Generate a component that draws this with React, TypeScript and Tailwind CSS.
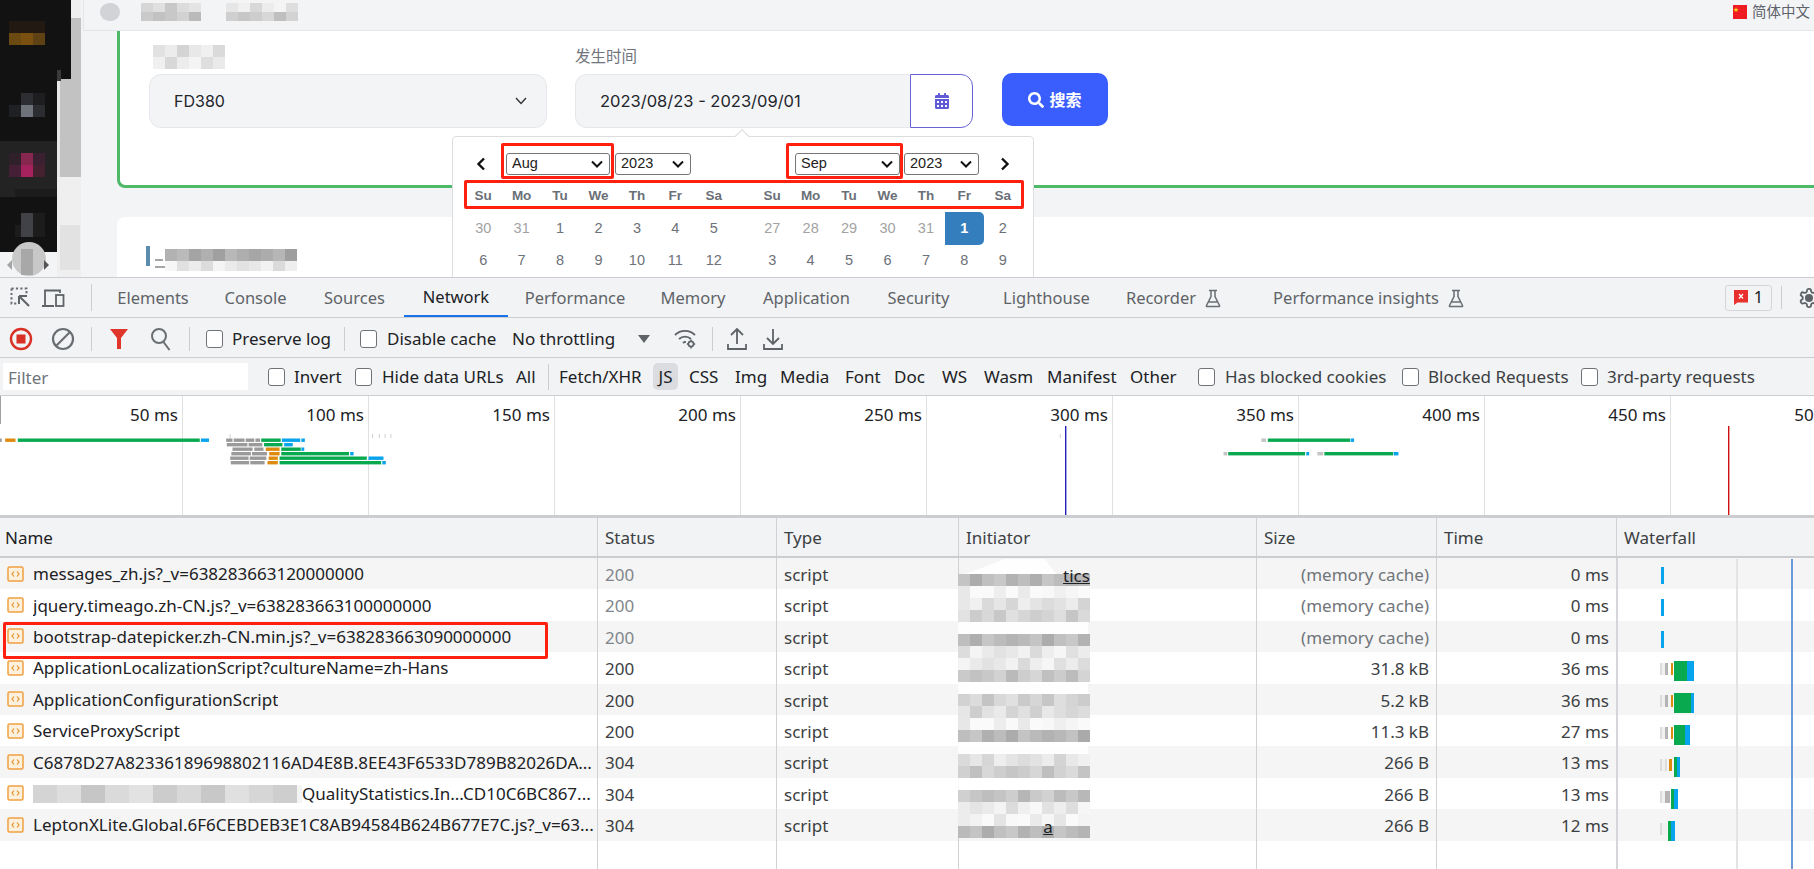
import React from "react";
import { FaCalendarAlt, FaSearch } from "react-icons/fa";

const DT = "font-['Noto_Sans','Noto_Sans_CJK_SC',sans-serif]";
const SANS = "font-['Inter','Noto_Sans_CJK_SC',sans-serif]";
const ARIAL = "font-['Liberation_Sans',sans-serif]";
const jitter = [0, 10, -14, 6, 14, -8, 4, -12, 12, 2, -6];

function Band({ x, y, n, g, w = 12, h = 12 }: { x: number; y: number; n: number; g: number; w?: number; h?: number }) {
  return (
    <>
      {Array.from({ length: n }).map((_, i) => {
        const v = Math.min(250, g + jitter[(i + Math.round(y)) % jitter.length]);
        return <rect key={i} x={x + i * w} y={y} width={w} height={h} fill={`rgb(${v},${v},${v})`} />;
      })}
    </>
  );
}

function Sidebar() {
  return (
    <svg className="w-[83px] h-[277px] shrink-0 bg-[#f3f4f6]" viewBox="0 0 83 277">
      <rect x="57" y="0" width="24" height="277" fill="#efefef" />
      <rect x="60" y="18" width="21" height="159" fill="#c2c2c2" />
      <rect x="57" y="70" width="3" height="107" fill="#e8e8e8" />
      <rect x="0" y="0" width="71" height="79" fill="#121212" />
      <rect x="0" y="79" width="57" height="173" fill="#121212" />
      <rect x="57" y="70" width="4" height="11" fill="#3a3a3a" />
      <rect x="9" y="21" width="36" height="12" fill="#221a12" />
      <rect x="9" y="33" width="12" height="12" fill="#6b4a12" />
      <rect x="21" y="33" width="12" height="12" fill="#7a5010" />
      <rect x="33" y="33" width="12" height="12" fill="#5e4214" />
      <rect x="21" y="93" width="12" height="12" fill="#2c2e33" />
      <rect x="33" y="93" width="12" height="12" fill="#1e1e20" />
      <rect x="9" y="105" width="12" height="12" fill="#1e2024" />
      <rect x="21" y="105" width="12" height="12" fill="#6e727b" />
      <rect x="33" y="105" width="12" height="12" fill="#2c2d30" />
      <rect x="0" y="141" width="57" height="56" fill="#232323" />
      <rect x="9" y="153" width="12" height="12" fill="#30202a" />
      <rect x="21" y="153" width="12" height="12" fill="#85274f" />
      <rect x="33" y="153" width="12" height="12" fill="#3a2030" />
      <rect x="9" y="165" width="12" height="12" fill="#451f35" />
      <rect x="21" y="165" width="12" height="12" fill="#a6225f" />
      <rect x="33" y="165" width="12" height="12" fill="#45202f" />
      <rect x="15" y="189" width="42" height="8" fill="#1c1c1c" />
      <rect x="15" y="225" width="6" height="12" fill="#1c1c1c" />
      <rect x="21" y="213" width="12" height="24" fill="#404248" />
      <rect x="33" y="213" width="12" height="24" fill="#1c1c1c" />
      <rect x="60" y="225" width="20" height="45" fill="#e2e2e2" />
      <circle cx="29" cy="259" r="17" fill="#c8c8c8" />
      <rect x="21" y="249" width="12" height="26" fill="#a8a8a8" />
      <path d="M12 260l-5 5 5 5z" fill="#a5a5a5" />
      <path d="M44 260l5 5-5 5z" fill="#555" />
    </svg>
  );
}

const off1 = ["30", "31"];
const leftDays = [["30", "31", "1", "2", "3", "4", "5"], ["6", "7", "8", "9", "10", "11", "12"]];
const rightDays = [["27", "28", "29", "30", "31", "1", "2"], ["3", "4", "5", "6", "7", "8", "9"]];
const week = ["Su", "Mo", "Tu", "We", "Th", "Fr", "Sa"];

function Chevron({ className }: { className: string }) {
  return (
    <svg className={className} viewBox="0 0 12 8" fill="none" stroke="#111" strokeWidth="2">
      <path d="M1 1.5l5 5 5-5" />
    </svg>
  );
}

function MiniSelect({ label, w }: { label: string; w: string }) {
  return (
    <div className={`${w} h-[22px] border border-[#767676] rounded-[3px] flex items-center justify-between pl-[5px] pr-[6px] text-[14.5px] text-[#222] bg-white`}>
      <span>{label}</span>
      <Chevron className="w-[12px] h-[8px]" />
    </div>
  );
}

function Calendar({ rows, kind }: { rows: string[][]; kind: "left" | "right" }) {
  return (
    <div className="w-[269px]">
      <div className="h-[22px] flex items-center">
        {kind === "left" ? (
          <>
            <svg className="w-[10px] h-[14px] ml-[12px] mr-[20px]" viewBox="0 0 10 14" fill="none" stroke="#111" strokeWidth="2.4">
              <path d="M8 1.5L2.5 7 8 12.5" />
            </svg>
            <MiniSelect label="Aug" w="w-[104px]" />
            <div className="w-[5px]" />
            <MiniSelect label="2023" w="w-[76px]" />
          </>
        ) : (
          <>
            <div className="w-[42px]" />
            <MiniSelect label="Sep" w="w-[105px]" />
            <div className="w-[4px]" />
            <MiniSelect label="2023" w="w-[75px]" />
            <svg className="w-[10px] h-[14px] ml-[21px]" viewBox="0 0 10 14" fill="none" stroke="#111" strokeWidth="2.4">
              <path d="M2 1.5L7.5 7 2 12.5" />
            </svg>
          </>
        )}
      </div>
      <div className="mt-[5px] grid grid-cols-7 h-[32px] items-center text-center text-[13.5px] font-bold text-[#6b7078]">
        {week.map((d) => (
          <div key={d}>{d}</div>
        ))}
      </div>
      {rows.map((r, ri) => (
        <div key={ri} className="grid grid-cols-7 h-[32px] text-center text-[14.5px] text-[#6d7178]">
          {r.map((d, i) => {
            const isOff = ri === 0 && (kind === "left" ? off1.includes(d) && i < 2 : i < 5);
            const sel = kind === "right" && ri === 0 && i === 5;
            return (
              <div
                key={i}
                className={
                  sel
                    ? "h-[33px] leading-[33px] bg-[#357ebd] text-white font-bold rounded-r-[5px]"
                    : isOff
                      ? "leading-[32px] text-[#a3a3a3]"
                      : "leading-[32px]"
                }
              >
                {d}
              </div>
            );
          })}
        </div>
      ))}
    </div>
  );
}

function PageArea() {
  return (
    <div className="relative h-[277px] flex overflow-hidden bg-[#f3f4f6]">
      <Sidebar />
      <div className="flex-1 flex flex-col">
        <div className="h-[31px] shrink-0 border-l border-b border-[#e4e5e8] flex items-start justify-end relative">
          <svg className="absolute left-[16px] top-[3px] w-[215px] h-[18px]" viewBox="0 0 215 18">
            <rect x="0" y="0" width="20" height="18" rx="9" fill="#d2d3d6" />
            <Band x={41} y={0} n={5} g={214} h={9} />
            <Band x={41} y={9} n={5} g={200} h={9} />
            <Band x={126} y={0} n={6} g={230} h={9} />
            <Band x={126} y={9} n={6} g={205} h={9} />
          </svg>
          <div className={`mt-[4px] mr-[4px] flex items-center gap-[5px] text-[14.5px] leading-[16px] text-[#5f636b] ${SANS}`}>
            <svg className="w-[14px] h-[14px]" viewBox="0 0 14 14">
              <rect width="14" height="14" fill="#f01c24" />
              <path d="M3 2l.7 1.9 2 .1-1.6 1.2.6 1.9L3 6l-1.7 1.1.6-1.9L.3 4l2-.1z" fill="#fcd116" />
            </svg>
            <span>简体中文</span>
          </div>
        </div>
        <div className="ml-[34px] h-[157px] shrink-0 bg-white border-l-[3px] border-b-[3px] border-[#4fb96a] rounded-bl-[8px] pl-[29px] flex items-start">
          <div className="w-[398px] mt-[14px]">
            <svg className="w-[80px] h-[24px] block" viewBox="0 0 80 24">
              <Band x={4} y={0} n={6} g={226} />
              <Band x={4} y={12} n={6} g={230} />
            </svg>
            <div className={`mt-[5px] h-[54px] flex items-center justify-between pl-[24px] pr-[19px] bg-[#f3f4f6] border border-[#e6e7ea] rounded-[12px] text-[16px] text-[#22252b] ${SANS}`}>
              <span>FD380</span>
              <svg className="w-[12px] h-[8px]" viewBox="0 0 12 8" fill="none" stroke="#333" strokeWidth="1.4">
                <path d="M1 1l5 5.5L11 1" />
              </svg>
            </div>
          </div>
          <div className={`w-[398px] ml-[28px] mt-[14px] ${SANS}`}>
            <div className="h-[24px] leading-[24px] text-[15.5px] text-[#70747c]">发生时间</div>
            <div className="mt-[5px] flex h-[54px]">
              <div className="w-[335px] flex items-center pl-[24px] bg-[#f3f4f6] border border-r-0 border-[#e6e7ea] rounded-l-[12px] text-[16.5px] text-[#22252b]">
                2023/08/23 - 2023/09/01
              </div>
              <div className="w-[63px] flex items-center justify-center bg-white border border-[#6a63d8] rounded-r-[12px]">
                <FaCalendarAlt className="text-[#5f5bd6] text-[16px]" />
              </div>
            </div>
          </div>
          <div className={`ml-[29px] mt-[42px] w-[106px] h-[53px] bg-[#3a5dfe] rounded-[10px] flex items-center justify-center gap-[5px] text-white font-bold text-[16px] ${SANS}`}>
            <FaSearch className="text-[16px]" />
            <span>搜索</span>
          </div>
        </div>
        <div className="ml-[34px] mt-[29px] flex-1 bg-white rounded-tl-[8px] pl-[29px] pt-[29px]">
          <div className="flex items-start">
            <div className="w-[4px] h-[20px] bg-[#5b8cad]" />
            <svg className="w-[147px] h-[25px]" viewBox="0 0 147 25">
              <path d="M5 14h8M5 21h14" stroke="#888" strokeWidth="1.5" />
              <Band x={15} y={3} n={11} g={172} />
              <Band x={15} y={15} n={11} g={232} h={10} />
            </svg>
          </div>
        </div>
      </div>
      {/* date range popup */}
      <div className={`absolute left-[452px] top-[136px] w-[582px] h-[150px] bg-white border border-[#ddd] rounded-[4px] px-[11px] pt-[16px] flex gap-[20px] ${ARIAL}`}>
        <Calendar rows={leftDays} kind="left" />
        <Calendar rows={rightDays} kind="right" />
      </div>
      <div className="absolute left-[737px] top-[131px] w-[10px] h-[10px] rotate-45 bg-white border-l border-t border-[#ddd]" />
      <div className="absolute left-[501px] top-[143px] w-[113px] h-[36px] border-[3px] border-[#ff2010] rounded-[2px]" />
      <div className="absolute left-[786px] top-[143px] w-[117px] h-[36px] border-[3px] border-[#ff2010] rounded-[2px]" />
      <div className="absolute left-[464px] top-[180px] w-[560px] h-[29px] border-[3px] border-[#ff2010] rounded-[2px]" />
    </div>
  );
}

function Flask() {
  return (
    <svg className="w-[18px] h-[19px]" viewBox="0 0 18 19" fill="none" stroke="#6a6e73" strokeWidth="1.5">
      <path d="M5 1.5h8M7 1.5v6L2.5 16.5c-.3.7 0 1 .7 1h11.6c.7 0 1-.3.7-1L11 7.5v-6M5 13h8" />
    </svg>
  );
}

const tabs = [
  { t: "Elements", w: "w-[106px]" },
  { t: "Console", w: "w-[99px]" },
  { t: "Sources", w: "w-[99px]" },
  { t: "Network", w: "w-[104px]", active: true },
  { t: "Performance", w: "w-[134px]" },
  { t: "Memory", w: "w-[102px]" },
  { t: "Application", w: "w-[125px]" },
  { t: "Security", w: "w-[99px]" },
];

function TabBar() {
  return (
    <div className="h-[41px] flex items-stretch border-t border-b border-[#cbcdd1] bg-[#f1f3f4] text-[#5f6368] relative text-[16.5px]">
      <div className="w-[91px] flex items-center">
        <svg className="w-[22px] h-[22px] ml-[10px]" viewBox="0 0 22 22" fill="none" stroke="#6a6e73">
          <path d="M1.5 1.5h15v6M1.5 1.5v15h6" strokeWidth="2" strokeDasharray="2.2 2.2" />
          <path d="M9 9h8M9 9v8M9 9l10 10" strokeWidth="2" stroke="#5f6368" />
        </svg>
        <svg className="w-[24px] h-[20px] ml-[9px]" viewBox="0 0 24 20" fill="none" stroke="#5f6368" strokeWidth="1.8">
          <path d="M1 18h12M4 18V2.5h15V5" />
          <rect x="15" y="7" width="7.5" height="11" />
        </svg>
      </div>
      <div className="w-px my-[6px] bg-[#cbcdd1]" />
      <div className="w-[8px]" />
      {tabs.map((tab) => (
        <div
          key={tab.t}
          className={`${tab.w} shrink-0 flex items-center justify-center pt-[2px] ${tab.active ? "text-[#202124] border-b-2 border-[#1a73e8]" : ""}`}
        >
          {tab.t}
        </div>
      ))}
      <div className="w-[17px]" />
      <div className="w-[123px] flex items-center justify-center pt-[2px]">Lighthouse</div>
      <div className="w-[132px] flex items-center justify-center gap-[8px] pt-[2px]">
        Recorder <Flask />
      </div>
      <div className="w-[15px]" />
      <div className="w-[228px] flex items-center justify-center gap-[8px] pt-[2px]">
        Performance insights <Flask />
      </div>
      <div className="flex-1" />
      <div className="w-[47px] h-[26px] self-center border border-[#d4d6da] rounded-[3px] flex items-center justify-center gap-[6px] text-[#202124]">
        <svg className="w-[14px] h-[15px]" viewBox="0 0 14 15">
          <path d="M0 0h14v12.5H3.5L0 15z" fill="#e8312f" />
          <path d="M5 4l4 4.5M9 4L5 8.5" stroke="#fff" strokeWidth="1.2" />
        </svg>
        1
      </div>
      <div className="w-px my-[8px] ml-[9px] bg-[#cbcdd1]" />
      <svg className="w-[22px] h-[22px] ml-[16px] -mr-[6px] self-center shrink-0" viewBox="0 0 24 24" fill="none" stroke="#5f6368" strokeWidth="2">
        <circle cx="12" cy="12" r="3.4" fill="#5f6368" />
        <path d="M12.2 2h-.4a2 2 0 0 0-2 2v.2a2 2 0 0 1-1 1.7l-.4.3a2 2 0 0 1-2 0l-.2-.1a2 2 0 0 0-2.7.7l-.2.4a2 2 0 0 0 .7 2.7l.2.1a2 2 0 0 1 1 1.7v.5a2 2 0 0 1-1 1.7l-.2.1a2 2 0 0 0-.7 2.7l.2.4a2 2 0 0 0 2.7.7l.2-.1a2 2 0 0 1 2 0l.4.3a2 2 0 0 1 1 1.7v.2a2 2 0 0 0 2 2h.4a2 2 0 0 0 2-2v-.2a2 2 0 0 1 1-1.7l.4-.3a2 2 0 0 1 2 0l.2.1a2 2 0 0 0 2.7-.7l.2-.4a2 2 0 0 0-.7-2.7l-.2-.1a2 2 0 0 1-1-1.7v-.5a2 2 0 0 1 1-1.7l.2-.1a2 2 0 0 0 .7-2.7l-.2-.4a2 2 0 0 0-2.7-.7l-.2.1a2 2 0 0 1-2 0l-.4-.3a2 2 0 0 1-1-1.7V4a2 2 0 0 0-2-2z" />
      </svg>
    </div>
  );
}

function Box() {
  return <div className="w-[17px] h-[18px] rounded-[3px] border-[1.5px] border-[#6f7378] bg-white" />;
}

function ToolBar() {
  return (
    <div className="h-[40px] flex items-center pt-[3px] border-b border-[#cbcdd1] bg-[#f1f3f4] text-[17px] text-[#202124] whitespace-nowrap">
      <svg className="w-[24px] h-[24px] ml-[9px] shrink-0" viewBox="0 0 24 24">
        <circle cx="12" cy="12" r="10" fill="none" stroke="#d93025" strokeWidth="2.4" />
        <rect x="7.5" y="7.5" width="9" height="9" fill="#d93025" />
      </svg>
      <svg className="w-[24px] h-[24px] ml-[18px] shrink-0" viewBox="0 0 24 24" fill="none" stroke="#6a6e73" strokeWidth="2.2">
        <circle cx="12" cy="12" r="10" />
        <path d="M5 19L19 5" />
      </svg>
      <div className="w-px h-[24px] ml-[16px] bg-[#cbcdd1]" />
      <svg className="w-[18px] h-[22px] ml-[18px] shrink-0" viewBox="0 0 18 22">
        <path d="M0 1h18l-7 9v11H7V10z" fill="#e0352b" />
      </svg>
      <svg className="w-[22px] h-[24px] ml-[22px] shrink-0" viewBox="0 0 22 24" fill="none" stroke="#6a6e73" strokeWidth="2">
        <circle cx="9" cy="9" r="7" />
        <path d="M13.5 15l6 8" />
      </svg>
      <div className="w-px h-[24px] ml-[17px] bg-[#cbcdd1]" />
      <div className="ml-[16px]"><Box /></div>
      <div className="ml-[9px] w-[97px]">Preserve log</div>
      <div className="w-px h-[24px] ml-[15px] bg-[#cbcdd1]" />
      <div className="ml-[15px]"><Box /></div>
      <div className="ml-[10px] w-[107px]">Disable cache</div>
      <div className="ml-[18px] w-[102px]">No throttling</div>
      <div className="ml-[24px] w-0 h-0 border-l-[6px] border-r-[6px] border-t-[8px] border-l-transparent border-r-transparent border-t-[#5f6368]" />
      <svg className="w-[24px] h-[22px] ml-[24px] shrink-0" viewBox="0 0 24 22" fill="none" stroke="#5f6368" strokeWidth="1.8">
        <path d="M1 7a14 14 0 0 1 20 0M5 11a9 9 0 0 1 12 0M9 15a4 4 0 0 1 3-1.2" />
        <circle cx="17" cy="16" r="2.6" strokeWidth="1.6" />
        <path d="M17 11.5v2M17 18.5v2M12.8 16h2M19.2 16h2" strokeWidth="1.4" />
      </svg>
      <div className="w-px h-[24px] ml-[14px] bg-[#cbcdd1]" />
      <svg className="w-[20px] h-[24px] ml-[14px] shrink-0" viewBox="0 0 20 24" fill="none" stroke="#5f6368" strokeWidth="1.8">
        <path d="M10 17V2M4 8l6-6 6 6M1 17v5h18v-5" />
      </svg>
      <svg className="w-[20px] h-[24px] ml-[16px] shrink-0" viewBox="0 0 20 24" fill="none" stroke="#5f6368" strokeWidth="1.8">
        <path d="M10 2v15M4 11l6 6 6-6M1 17v5h18v-5" />
      </svg>
    </div>
  );
}

const types = [
  { t: "Fetch/XHR", c: "w-[84px] ml-[10px]" },
  { t: "JS", c: "w-[25px] ml-[10px] bg-[#dadce0] rounded-[5px] h-[27px] leading-[27px] text-center" },
  { t: "CSS", c: "w-[31px] ml-[11px]" },
  { t: "Img", c: "w-[29px] ml-[15px]" },
  { t: "Media", c: "w-[50px] ml-[16px]" },
  { t: "Font", c: "w-[36px] ml-[15px]" },
  { t: "Doc", c: "w-[32px] ml-[13px]" },
  { t: "WS", c: "w-[25px] ml-[16px]" },
  { t: "Wasm", c: "w-[47px] ml-[17px]" },
  { t: "Manifest", c: "w-[68px] ml-[16px]" },
  { t: "Other", c: "w-[46px] ml-[15px]" },
];

function FilterBar() {
  return (
    <div className="h-[38px] flex items-center border-b border-[#cbcdd1] bg-[#f1f3f4] text-[17px] text-[#202124] whitespace-nowrap">
      <div className="ml-[3px] w-[245px] h-[27px] bg-white pl-[5px] leading-[29px] text-[#70757a]">Filter</div>
      <div className="ml-[20px]"><Box /></div>
      <div className="ml-[9px] w-[45px]">Invert</div>
      <div className="ml-[16px]"><Box /></div>
      <div className="ml-[10px] w-[121px]">Hide data URLs</div>
      <div className="ml-[13px] w-[20px]">All</div>
      <div className="ml-[12px] w-px h-[26px] bg-[#cbcdd1]" />
      {types.map((x) => (
        <div key={x.t} className={x.c}>{x.t}</div>
      ))}
      <div className="ml-[22px]"><Box /></div>
      <div className="ml-[10px] w-[161px] text-[#3c4043]">Has blocked cookies</div>
      <div className="ml-[16px]"><Box /></div>
      <div className="ml-[9px] w-[138px] text-[#3c4043]">Blocked Requests</div>
      <div className="ml-[15px]"><Box /></div>
      <div className="ml-[9px] w-[147px] text-[#3c4043]">3rd-party requests</div>
    </div>
  );
}

const labels = ["50 ms", "100 ms", "150 ms", "200 ms", "250 ms", "300 ms", "350 ms", "400 ms", "450 ms", "500 ms"];

type Seg = [number, number, string];
const G = "#9a9a9a", O = "#dd8a0e", N = "#09a94f", B = "#07a3ec";
const s5 = (a: number, b: number) => [a / 1.742, b / 1.742] as const;
const lines: { y: number; segs: Seg[] }[] = [
  { y: 438.5, segs: [[0, 3, G], [9, 27, O], [31, 348, N], [350, 364, B], [394, 405, G], [407, 426, G], [428, 443, G], [445, 453, G], [455, 489, N], [491, 523, B], [525, 531, B]] },
  { y: 443, segs: [[395, 431, G], [433, 457, G], [460, 492, N], [495, 510, B]] },
  { y: 447.5, segs: [[405, 440, G], [443, 459, G], [463, 487, O], [490, 524, N], [525, 530, B]] },
  { y: 452, segs: [[403, 437, G], [439, 465, G], [469, 487, O], [490, 608, N], [610, 616, B]] },
  { y: 456.5, segs: [[401, 433, G], [435, 464, G], [468, 484, O], [487, 639, N], [642, 668, B]] },
  { y: 461, segs: [[402, 434, G], [436, 461, G], [466, 484, O], [487, 664, N], [666, 672, B]] },
];
const far: { y: number; a: number; b: number; c: string }[] = [
  { y: 438.5, a: 620, b: 628, c: "#c4c4c4" },
  { y: 438.5, a: 631, b: 772, c: N },
  { y: 438.5, a: 773, b: 779, c: B },
  { y: 452, a: 555, b: 561, c: "#c4c4c4" },
  { y: 452, a: 563, b: 695, c: N },
  { y: 452, a: 697, b: 702, c: B },
  { y: 452, a: 716, b: 726, c: "#c4c4c4" },
  { y: 452, a: 728, b: 846, c: N },
  { y: 452, a: 847, b: 855, c: B },
];

function Timeline() {
  return (
    <div className="relative h-[122px] bg-white border-b-[3px] border-[#cbcdd1] overflow-hidden whitespace-nowrap">
      <div className="flex h-full w-[1900px] text-[17px] text-[#202124]">
        <div className="w-[183px] shrink-0 border-r border-[#e0e0e0] text-right pr-[4px] pt-[6px]">{labels[0]}</div>
        {labels.slice(1).map((l) => (
          <div key={l} className="w-[186px] shrink-0 border-r border-[#e0e0e0] text-right pr-[4px] pt-[6px]">{l}</div>
        ))}
      </div>
      <svg className="absolute left-0 top-0 w-[1814px] h-[122px]" viewBox="0 396 1814 122">
        <rect x="0" y="396" width="1" height="28" fill="#a0a0a0" />
        {[400, 648, 660, 670, 680].map((x) => (
          <rect key={x} x={x / 1.742} y="434" width="1" height="4" fill="#d0d0d0" />
        ))}
        <rect x={900 + 274 / 1.7155} y="434" width="1" height="4" fill="#d0d0d0" />
        {lines.map((l) =>
          l.segs.map(([a, b, c], i) => {
            const [x1, x2] = s5(a, b);
            return <rect key={`${l.y}-${i}`} x={x1} y={l.y} width={x2 - x1} height="3.4" fill={c} />;
          })
        )}
        {far.map((f, i) => (
          <rect key={i} x={900 + f.a / 1.7155} y={f.y} width={(f.b - f.a) / 1.7155} height="3.4" fill={f.c} />
        ))}
        <rect x="1065" y="426" width="1.4" height="92" fill="#2222bb" />
        <rect x="1728" y="426" width="1.4" height="92" fill="#d01010" />
      </svg>
    </div>
  );
}

const cols = "grid grid-cols-[597px_179px_182px_298px_180px_180px_198px]";
const cell = "border-l border-[#cfd1d5] px-[7px] truncate";

type Row = { name: React.ReactNode; status: string; dim?: boolean; size: string; time: string };
const rows: Row[] = [
  { name: "messages_zh.js?_v=638283663120000000", status: "200", dim: true, size: "(memory cache)", time: "0 ms" },
  { name: "jquery.timeago.zh-CN.js?_v=638283663100000000", status: "200", dim: true, size: "(memory cache)", time: "0 ms" },
  { name: "bootstrap-datepicker.zh-CN.min.js?_v=638283663090000000", status: "200", dim: true, size: "(memory cache)", time: "0 ms" },
  { name: "ApplicationLocalizationScript?cultureName=zh-Hans", status: "200", size: "31.8 kB", time: "36 ms" },
  { name: "ApplicationConfigurationScript", status: "200", size: "5.2 kB", time: "36 ms" },
  { name: "ServiceProxyScript", status: "200", size: "11.3 kB", time: "27 ms" },
  { name: "C6878D27A82336189698802116AD4E8B.8EE43F6533D789B82026DA...", status: "304", size: "266 B", time: "13 ms" },
  {
    name: (
      <>
        <svg className="inline-block w-[269px] h-[18px] align-[-3px]" viewBox="0 0 269 18">
          <rect width="269" height="18" fill="#f4f4f4" />
          <Band x={0} y={0} n={11} g={212} w={24} h={18} />
        </svg>
        <span>QualityStatistics.In...CD10C6BC867...</span>
      </>
    ),
    status: "304",
    size: "266 B",
    time: "13 ms",
  },
  { name: "LeptonXLite.Global.6F6CEBDEB3E1C8AB94584B624B677E7C.js?_v=63...", status: "304", size: "266 B", time: "12 ms" },
];

function JsIcon() {
  return (
    <svg className="w-[17px] h-[16px] shrink-0" viewBox="0 0 17 16">
      <rect x="1" y="1" width="15" height="14" rx="1.5" fill="#fdf0dc" stroke="#f0a040" strokeWidth="1.5" />
      <path d="M7 5.5L5 8l2 2.5M10 5.5L12 8l-2 2.5" fill="none" stroke="#e8912d" strokeWidth="1.2" />
    </svg>
  );
}

const initBands: [number, number][] = [
  [573, 186], [585, 246], [597, 226], [609, 212], [633, 186], [645, 232], [657, 232], [669, 200],
  [693, 210], [705, 220], [717, 245], [729, 184], [753, 226], [765, 204], [789, 196], [801, 234], [813, 242], [825, 186],
];

const LG = "#dcdcdc", DG = "#b4b4b4", W = "#f0f0f0";
const wf: { y: number; h: number; segs: [number, number, string][] }[] = [
  { y: 566, h: 17, segs: [[1661, 1664, B]] },
  { y: 598, h: 17, segs: [[1661, 1664, B]] },
  { y: 630, h: 17, segs: [[1661, 1664, B]] },
  { y: 662, h: 12, segs: [[1660, 1662, LG], [1662, 1665, W], [1665, 1668, DG], [1671, 1673, O]] },
  { y: 660, h: 20, segs: [[1674, 1687, N], [1687, 1694, B]] },
  { y: 694, h: 12, segs: [[1660, 1662, LG], [1662, 1665, W], [1665, 1668, DG], [1671, 1673, O]] },
  { y: 692, h: 20, segs: [[1674, 1691, N], [1691, 1694, B]] },
  { y: 726, h: 12, segs: [[1660, 1662, LG], [1662, 1665, W], [1665, 1668, DG], [1671, 1673, O]] },
  { y: 724, h: 20, segs: [[1674, 1685, N], [1685, 1690, B]] },
  { y: 758, h: 12, segs: [[1660, 1662, LG], [1662, 1665, W], [1665, 1667, LG], [1669, 1672, O]] },
  { y: 756, h: 20, segs: [[1674, 1677, N], [1677, 1680, B]] },
  { y: 790, h: 12, segs: [[1660, 1662, LG], [1662, 1665, W], [1665, 1670, DG]] },
  { y: 788, h: 20, segs: [[1671, 1674, N], [1674, 1678, B]] },
  { y: 822, h: 12, segs: [[1660, 1662, LG], [1662, 1667, W]] },
  { y: 820, h: 20, segs: [[1668, 1671, N], [1671, 1675, B]] },
];

function Table() {
  return (
    <div className="relative flex-1 flex flex-col bg-white text-[17px] whitespace-nowrap">
      <div className={`${cols} h-[40px] items-stretch bg-[#f1f3f4] border-b-2 border-[#cbcdd1] text-[#202124]`}>
        <div className="px-[5px] pt-[2px] flex items-center">Name</div>
        {["Status", "Type", "Initiator", "Size", "Time", "Waterfall"].map((h) => (
          <div key={h} className="border-l border-[#cfd1d5] px-[7px] pt-[2px] flex items-center text-[#3c4043]">{h}</div>
        ))}
      </div>
      {rows.map((r, i) => (
        <div key={i} className={`${cols} h-[31.4px] leading-[33px] text-[#202124] ${i % 2 === 0 ? "bg-[#f5f5f5]" : "bg-white"}`}>
          <div className="pl-[7px] pr-[2px] flex items-center gap-[9px] overflow-hidden">
            <JsIcon />
            <span className="truncate">{r.name}</span>
          </div>
          <div className={`${cell} ${r.dim ? "text-[#80868b]" : "text-[#3c4043]"}`}>{r.status}</div>
          <div className={`${cell} text-[#3c4043]`}>script</div>
          <div className={cell} />
          <div className={`${cell} text-right ${r.dim ? "text-[#70757a]" : "text-[#3c4043]"}`}>{r.size}</div>
          <div className={`${cell} text-right text-[#3c4043]`}>{r.time}</div>
          <div className="border-l-2 border-[#d4d6d9]" />
        </div>
      ))}
      <div className={`${cols} flex-1`}>
        <div />
        <div className="border-l border-[#cfd1d5]" />
        <div className="border-l border-[#cfd1d5]" />
        <div className="border-l border-[#cfd1d5]" />
        <div className="border-l border-[#cfd1d5]" />
        <div className="border-l border-[#cfd1d5]" />
        <div className="border-l-2 border-[#d4d6d9]" />
      </div>
      {/* blurred initiator cells */}
      <svg className="absolute left-[938px] top-[41px] w-[170px] h-[311px]" viewBox="938 558 170 311">
        <path d="M958 575c30-8 60-26 80-26l20 26 30 10v250h-130z" fill="#fff" opacity="0.9" />
        {initBands.map(([y, g]) => (
          <Band key={y} x={958} y={y} n={11} g={g} />
        ))}
      </svg>
      <div className="absolute left-[1063px] top-[41px] leading-[33px] underline text-[#202124]">tics</div>
      <div className="absolute left-[1034px] top-[292px] w-[28px] leading-[33px] underline text-[#202124] text-center">a</div>
      {/* waterfall drawing */}
      <svg className="absolute left-[1616px] top-[41px] w-[198px] h-[311px]" viewBox="1616 558 198 311">
        <rect x="1736" y="558" width="2" height="311" fill="#e2e3e5" />
        <rect x="1791" y="558" width="2" height="311" fill="#6e99d8" />
        {wf.map((w) =>
          w.segs.map(([a, b, c], i) => <rect key={`${w.y}-${i}`} x={a} y={w.y} width={b - a} height={w.h} fill={c} />)
        )}
      </svg>
      {/* annotation */}
      <div className="absolute left-[3px] top-[104px] w-[545px] h-[37px] border-[3px] border-[#ff2010] rounded-[2px]" />
    </div>
  );
}

export default function App() {
  return (
    <div className={`w-[1814px] h-[869px] flex flex-col overflow-hidden bg-white ${DT}`}>
      <PageArea />
      <TabBar />
      <ToolBar />
      <FilterBar />
      <Timeline />
      <Table />
    </div>
  );
}
